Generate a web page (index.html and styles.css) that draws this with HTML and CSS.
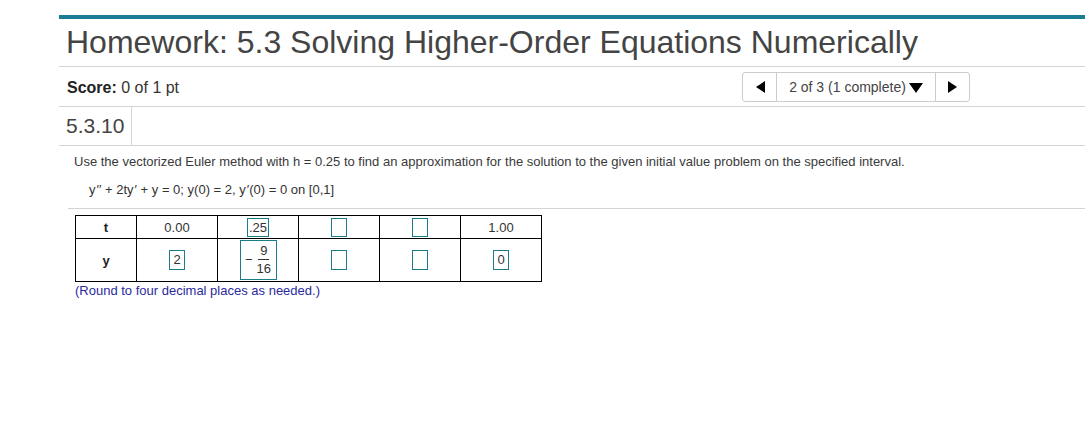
FILE: index.html
```html
<!DOCTYPE html>
<html>
<head>
<meta charset="utf-8">
<link rel="stylesheet" href="styles.css">
</head>
<body>
<div class="page">
  <div class="topbar"></div>
  <h1 class="title">Homework: 5.3 Solving Higher-Order Equations Numerically</h1>
  <div class="score-row">
    <div class="score"><b>Score:</b> 0 of 1 pt</div>
    <div class="nav">
      <div class="nav-btn"><span class="tri-left"></span></div>
      <div class="nav-mid">2 of 3 (1 complete)<span class="tri-down"></span></div>
      <div class="nav-btn"><span class="tri-right"></span></div>
    </div>
  </div>
  <div class="qnum-row"><div class="qnum">5.3.10</div></div>
  <div class="question">
    <p class="instr">Use the vectorized Euler method with h = 0.25 to find an approximation for the solution to the given initial value problem on the specified interval.</p>
    <p class="eq">y<span class="pr">′′</span> + 2ty<span class="pr">′</span> + y = 0; y(0) = 2, y<span class="pr">′</span>(0) = 0 on [0,1]</p>
  </div>
  <div class="work">
    <table class="grid">
      <tr class="r1">
        <th>t</th>
        <td>0.00</td>
        <td><span class="box">.25</span></td>
        <td><span class="box empty"></span></td>
        <td><span class="box empty"></span></td>
        <td>1.00</td>
      </tr>
      <tr class="r2">
        <th>y</th>
        <td><span class="box tall">2</span></td>
        <td><span class="box frac"><span class="minus">−</span><span class="fr"><span class="num">9</span><span class="den">16</span></span></span></td>
        <td><span class="box empty tall"></span></td>
        <td><span class="box empty tall"></span></td>
        <td><span class="box tall">0</span></td>
      </tr>
    </table>
    <div class="hint">(Round to four decimal places as needed.)</div>
  </div>
</div>
</body>
</html>
```

FILE: styles.css
```css
html, body {
  margin: 0;
  padding: 0;
  background: #fff;
}
body {
  font-family: "Liberation Sans", Arial, sans-serif;
  color: #333;
}
.page {
  margin-left: 59px;
  padding-top: 15px;
}
.topbar {
  height: 4px;
  background: #1b7c98;
}
.title {
  margin: 0;
  height: 47px;
  line-height: 47px;
  padding-left: 7px;
  font-size: 32px;
  font-weight: normal;
  color: #444;
  border-bottom: 1px solid #d2d4da;
  white-space: nowrap;
}
.score-row {
  display: flex;
  align-items: center;
  justify-content: space-between;
  height: 39px;
  border-bottom: 1px solid #d2d4da;
  padding-left: 8px;
  padding-right: 115px;
}
.score {
  font-size: 16px;
  color: #333;
  padding-top: 2px;
}
.score b {
  color: #222;
}
.nav {
  display: flex;
  height: 28px;
  border: 1px solid #ccc;
  border-radius: 3px;
  background: #fff;
  margin-top: 1px;
}
.nav-btn {
  width: 33px;
  display: flex;
  align-items: center;
  justify-content: center;
}
.nav-mid {
  width: 158px;
  border-left: 1px solid #ccc;
  border-right: 1px solid #ccc;
  display: flex;
  align-items: center;
  justify-content: center;
  font-size: 14px;
  color: #444;
}
.tri-left {
  width: 0; height: 0;
  border-top: 6px solid transparent;
  border-bottom: 6px solid transparent;
  border-right: 9px solid #000;
  margin-left: 1px;
}
.tri-right {
  width: 0; height: 0;
  border-top: 6px solid transparent;
  border-bottom: 6px solid transparent;
  border-left: 9px solid #000;
}
.tri-down {
  width: 0; height: 0;
  border-left: 7px solid transparent;
  border-right: 7px solid transparent;
  border-top: 10px solid #000;
  margin-left: 3px;
  margin-top: 1px;
}
.qnum-row {
  height: 38px;
  border-bottom: 1px solid #d2d4da;
  display: flex;
}
.qnum {
  padding-left: 7px;
  padding-right: 7px;
  font-size: 21px;
  color: #444;
  line-height: 38px;
  border-right: 1px solid #d2d4da;
}
.question {
  margin-left: 9px;
  border-bottom: 1px solid #d2d4da;
  height: 62px;
}
.instr {
  margin: 0;
  padding-top: 8px;
  padding-left: 6px;
  font-size: 13px;
  line-height: 16px;
  color: #3a3a3a;
}
.eq {
  margin: 12px 0 0 21px;
  font-size: 13px;
  line-height: 16px;
  color: #333;
}
.pr {
  font-size: 13px;
  margin-left: 1px;
}
.work {
  padding-left: 16px;
  padding-top: 6px;
}
.grid {
  border-collapse: collapse;
  font-size: 13px;
  color: #333;
}
.grid th, .grid td {
  border: 1px solid #000;
  text-align: center;
  padding: 0;
  width: 80px;
}
.grid th {
  width: 60px;
  font-weight: bold;
  color: #222;
}
.grid .r1 th, .grid .r1 td {
  height: 22px;
}
.grid .r2 th, .grid .r2 td {
  height: 42px;
}
.box {
  display: inline-block;
  vertical-align: middle;
  border: 1px solid #1b7c8c;
  min-width: 12px;
  height: 17px;
  line-height: 17px;
  padding: 0 1px;
  box-sizing: content-box;
}
.box.empty {
  width: 14px;
  min-width: 14px;
  padding: 0;
}
.box.tall {
  height: 18px;
  line-height: 18px;
}
.box.frac {
  height: 38px;
  width: 35px;
  padding: 0;
  display: inline-flex;
  align-items: center;
  justify-content: center;
  line-height: 14px;
}
.minus {
  margin-right: 4px;
}
.fr {
  display: inline-flex;
  flex-direction: column;
  align-items: center;
}
.num {
  padding: 0 2px 1px;
  border-bottom: 1px solid #333;
}
.den {
  padding-top: 2px;
}
.hint {
  font-size: 13px;
  color: #2b2b9e;
  margin-top: 1px;
}
```
